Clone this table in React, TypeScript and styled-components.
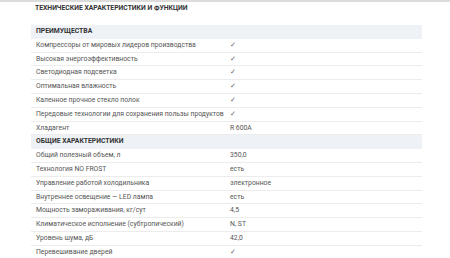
import React from "react";
import styled, { createGlobalStyle } from "styled-components";

type SpecRow = {
  name: string;
  value?: string;
  group?: boolean;
};

const rows: SpecRow[] = [
  { name: "ПРЕИМУЩЕСТВА", group: true },
  { name: "Компрессоры от мировых лидеров производства", value: "✓" },
  { name: "Высокая энергоэффективность", value: "✓" },
  { name: "Светодиодная подсветка", value: "✓" },
  { name: "Оптимальная влажность", value: "✓" },
  { name: "Каленное прочное стекло полок", value: "✓" },
  { name: "Передовые технологии для сохранения пользы продуктов", value: "✓" },
  { name: "Хладагент", value: "R 600A" },
  { name: "ОБЩИЕ ХАРАКТЕРИСТИКИ", group: true },
  { name: "Общий полезный объем, л", value: "350,0" },
  { name: "Технология NO FROST", value: "есть" },
  { name: "Управление работой холодильника", value: "электронное" },
  { name: "Внутреннее освещение — LED лампа", value: "есть" },
  { name: "Мощность замораживания, кг/сут", value: "4,5" },
  { name: "Климатическое исполнение (субтропический)", value: "N, ST" },
  { name: "Уровень шума, дБ", value: "42,0" },
  { name: "Перевешивание дверей", value: "✓" },
];

export default function App() {
  return (
    <>
      <GlobalStyle />
      <Page>
        <Title>Технические характеристики и функции</Title>
        <Table>
          {rows.map((row) =>
            row.group ? (
              <GroupRow key={row.name}>{row.name}</GroupRow>
            ) : (
              <Row key={row.name}>
                <Name>{row.name}</Name>
                <Value $check={row.value === "✓"}>{row.value}</Value>
              </Row>
            )
          )}
        </Table>
      </Page>
    </>
  );
}

const GlobalStyle = createGlobalStyle`
  body {
    margin: 0;
    background: #fff;
    font-family: Roboto, "Liberation Sans", sans-serif;
  }
`;

const Page = styled.div`
  width: 450px;
  height: 258px;
  overflow: hidden;
  border-top: 2px solid #dcdcdc;
  padding: 0 28px 0 31px;
  box-sizing: border-box;
`;

const Title = styled.h3`
  margin: 0;
  padding: 1px 0 0 4px;
  height: 23px;
  font-size: 6.8px;
  line-height: 10px;
  font-weight: 700;
  text-transform: uppercase;
  color: #333;
  box-sizing: border-box;
`;

const Table = styled.div`
  width: 391px;
  display: flex;
  flex-direction: column;
`;

const GroupRow = styled.div`
  height: 13.8px;
  line-height: 13.8px;
  padding-left: 5px;
  background: #eef2f6;
  font-size: 6.8px;
  font-weight: 700;
  color: #333;
  box-sizing: border-box;
`;

const Row = styled.div`
  display: grid;
  grid-template-columns: 194px 1fr;
  height: 13.8px;
  line-height: 12.8px;
  border-bottom: 1px solid #ececec;
  font-size: 6.8px;
  color: #555;
  box-sizing: border-box;
`;

const Name = styled.div`
  padding-left: 5px;
  white-space: nowrap;
`;

const Value = styled.div<{ $check?: boolean }>`
  padding-left: 5px;
  white-space: nowrap;
  color: ${(p) => (p.$check ? "#666" : "#555")};
  font-size: ${(p) => (p.$check ? "7.4px" : "6.8px")};
`;
